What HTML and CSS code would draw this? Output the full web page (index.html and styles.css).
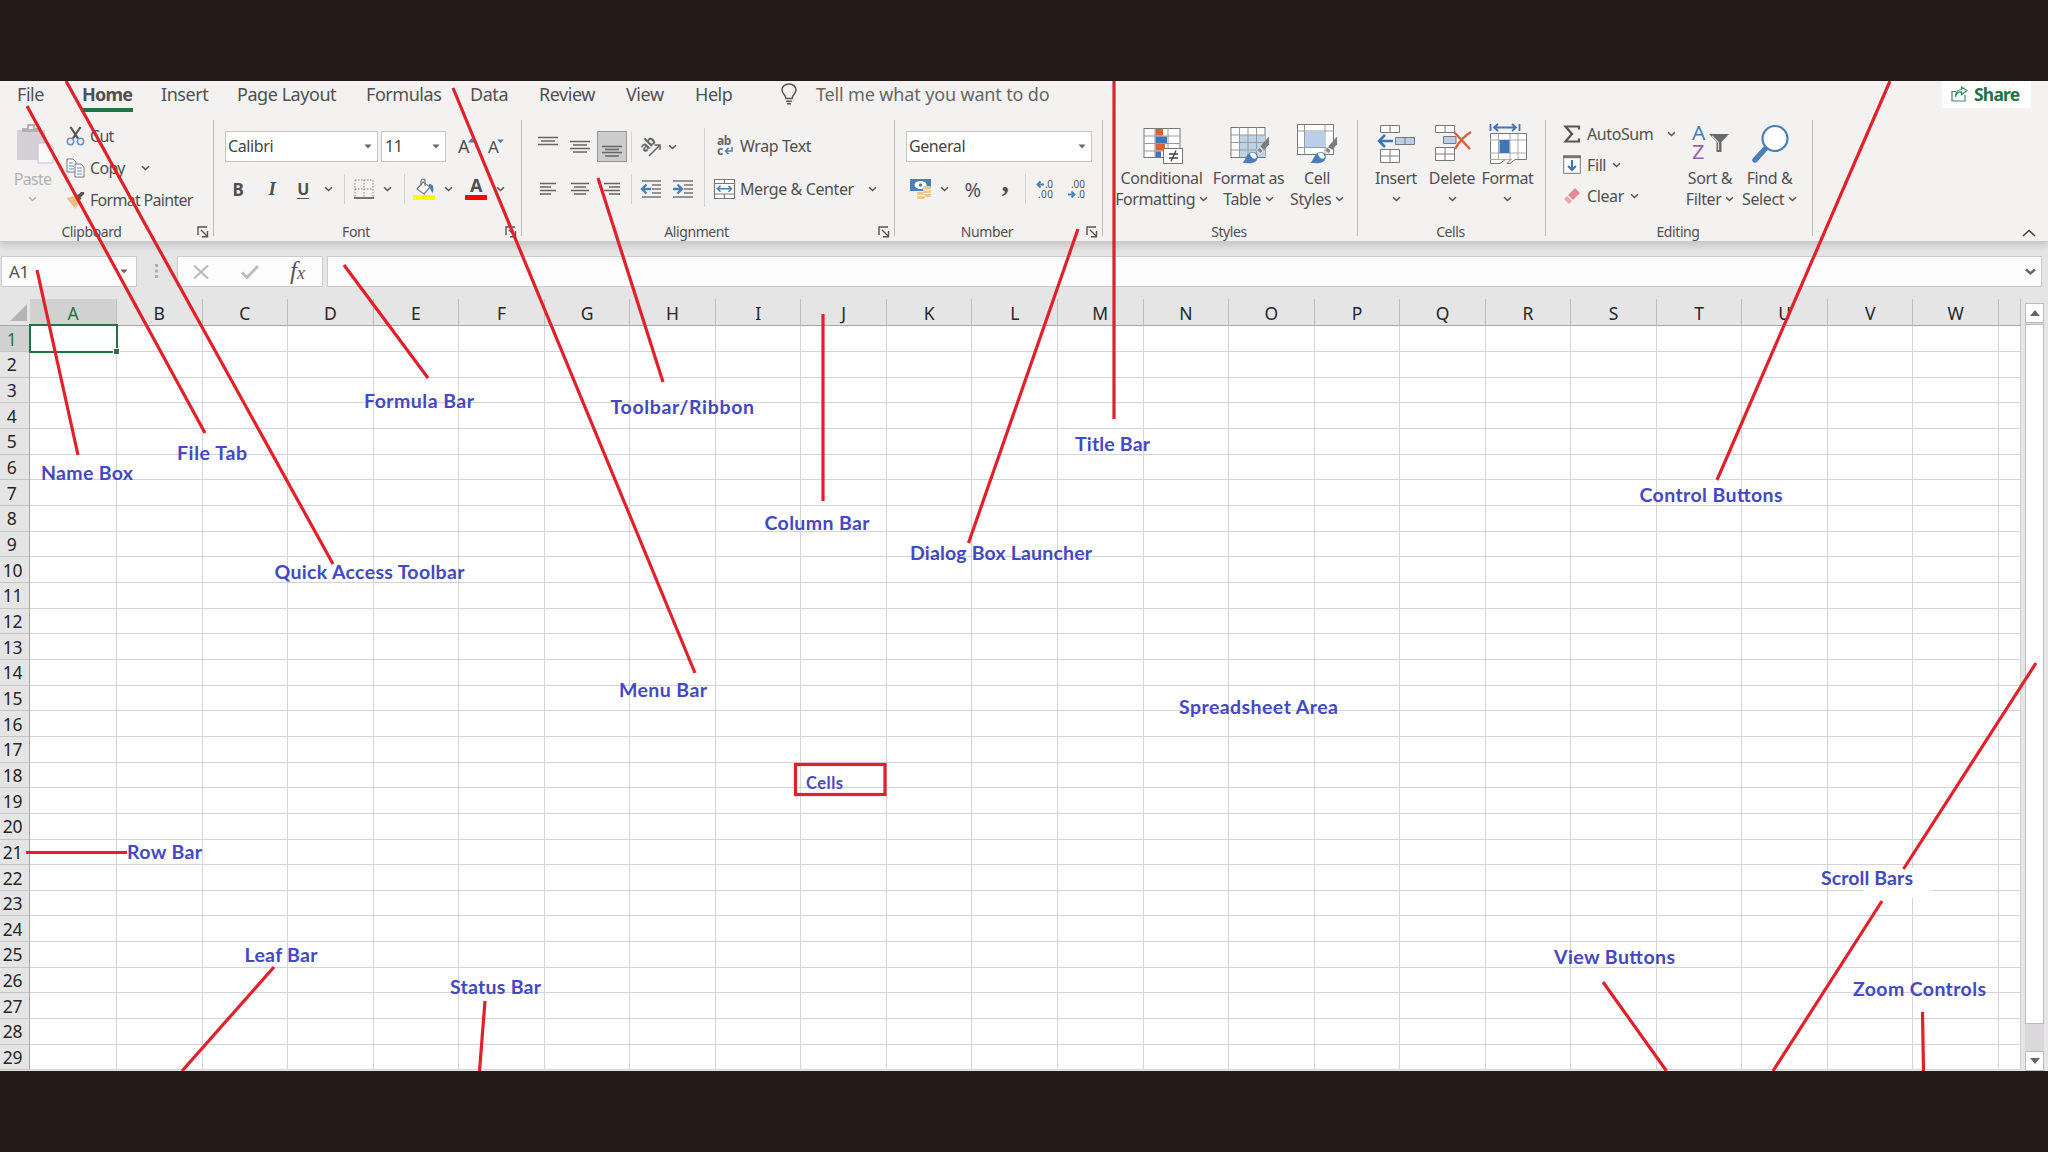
FILE: index.html
```html
<!DOCTYPE html>
<html lang="en">
<head>
    <meta charset="UTF-8">
    <meta name="viewport" content="width=device-width, initial-scale=1.0">
    <title>Parts of the Excel Window</title>
    <link rel="stylesheet" href="styles.css">
</head>
<body>

<svg class="defs" width="0" height="0">
    <symbol id="chev" viewBox="0 0 10 6"><path d="M1.2 1 L5 4.6 L8.8 1" fill="none" stroke="currentColor" stroke-width="1.7"/></symbol>
    <symbol id="caret" viewBox="0 0 8 5"><path d="M0.5 0.5 H7.5 L4 4.5 Z" fill="#666"/></symbol>
    <symbol id="launch" viewBox="0 0 12 12"><path d="M1 9 V1 H10 M4 4 L10 10 M10.5 5 V10.7 H5" fill="none" stroke="#555" stroke-width="1.4"/></symbol>
    <symbol id="brush" viewBox="0 0 30 30">
        <path d="M29 1 L20 11 L24 15 L29 9 Z" fill="#7c7c7c"/>
        <path d="M19 12 L23 16 L20 19 L16 15 Z" fill="#8a8a8a" stroke="#f3f2f1"/>
        <path d="M1 28 C5 27 5 17 12 17 C17 17 19 22 16 26 C13 29 6 29 1 28 Z" fill="#4a7fb8"/>
        <path d="M9 19 C12 16 17 19 16 23 C14 25 11 24 9 19 Z" fill="#fff"/>
    </symbol>
</svg>

<div class="workbook">
    <div class="tabs">
        <span class="tab file">File</span>
        <span class="tab home active">Home</span>
        <span class="tab insert">Insert</span>
        <span class="tab layout">Page Layout</span>
        <span class="tab formulas">Formulas</span>
        <span class="tab data">Data</span>
        <span class="tab review">Review</span>
        <span class="tab view">View</span>
        <span class="tab help">Help</span>
        <svg class="bulb" width="16" height="22" viewBox="0 0 16 22"><path d="M5 15.5 C5 12 1 11 1 7 C1 3.500 4 1 8 1 C12 1 15 3.500 15 7 C15 11 11 12 11 15.500 Z M5.200 18.300 H10.800 M6 20.800 H10" fill="none" stroke="#555" stroke-width="1.500"/></svg>
        <span class="tell">Tell me what you want to do</span>
        <button class="share">
            <svg width="17" height="16" viewBox="0 0 17 16"><path d="M5 5.500 H1 V15 H14 V9 M4.500 11 C5 7 7 5.800 10.500 5.800 V8.800 L16 4.600 L10.500 1 V3.500 C6.500 3.800 4.500 6.500 4.500 11 Z" fill="none" stroke="#3b8a62" stroke-width="1.200"/></svg>
            <span>Share</span>
        </button>
    </div>

    <div class="ribbon">
        <div class="group clipboard">
            <div class="body">
                <div class="paste">
                    <svg width="38" height="42" viewBox="0 0 38 42"><path d="M1 6 H29 V36 H1 Z" fill="#d5d0d5"/><path d="M6 8 V4 H11 V0 H19 V4 H24 V8 Z" fill="#b3b1b3"/><rect x="13" y="2" width="4" height="3" fill="#f3f2f1"/><path d="M22 19 H33 L37 23 V39 H22 Z" fill="#fbf9fb" stroke="#c5bfd0"/></svg>
                    <span>Paste</span>
                    <svg class="chev"><use href="#chev"/></svg>
                </div>
                <div class="stack">
                    <div class="tool"><svg width="18" height="20" viewBox="0 0 18 20"><path d="M4 1 L12 13 M14 1 L6 13" stroke="#555" stroke-width="2.200"/><circle cx="4" cy="15.500" r="3.200" fill="none" stroke="#6a93c4" stroke-width="1.500"/><circle cx="14" cy="15.500" r="3.200" fill="none" stroke="#6a93c4" stroke-width="1.500"/></svg><span>Cut</span></div>
                    <div class="tool"><svg width="19" height="20" viewBox="0 0 19 20"><path d="M1 1 H7 L10 4 V14 H1 Z" fill="#fff" stroke="#777"/><path d="M3 5 H7 M3 8 H8 M3 11 H8" stroke="#5a86bd"/><path d="M9 6 H15 L18 9 V19 H9 Z" fill="#fff" stroke="#777"/><path d="M11 10 H16 M11 13 H16 M11 16 H16" stroke="#5a86bd"/></svg><span>Copy</span><svg class="chev copychev"><use href="#chev"/></svg></div>
                    <div class="tool"><svg width="18" height="17" viewBox="0 0 18 17"><path d="M0 6 L9 4 L13 9 L9 17 Z" fill="#f0bd83"/><path d="M8 4 L12 2 L15 7 L12 9 Z" fill="#666"/><path d="M13 4 L16 1" stroke="#555" stroke-width="3.500" stroke-linecap="round"/></svg><span>Format Painter</span></div>
                </div>
            </div>
            <div class="caption"><span>Clipboard</span><svg class="launch"><use href="#launch"/></svg></div>
        </div>

        <div class="group font">
            <div class="body rows">
                <div class="line">
                    <div class="combo face"><span>Calibri</span><svg class="caret"><use href="#caret"/></svg></div>
                    <div class="combo size"><span>11</span><svg class="caret"><use href="#caret"/></svg></div>
                    <div class="grow">A<svg width="7" height="5" viewBox="0 0 7 5"><path d="M0 4.500 L3.500 0 L7 4.500 Z" fill="#4a7fb8"/></svg></div>
                    <div class="grow shrink">A<svg width="7" height="5" viewBox="0 0 7 5"><path d="M0 0.500 H7 L3.500 4 Z" fill="#4a7fb8"/></svg></div>
                </div>
                <div class="line font-tools">
                    <b>B</b>
                    <i>I</i>
                    <u>U</u>
                    <svg class="chev"><use href="#chev"/></svg>
                    <div class="sep"></div>
                    <svg width="20" height="20" viewBox="0 0 20 20"><path d="M1 1 H19 V18 M1 1 V18 M10 1 V18 M1 10 H19" fill="none" stroke="#888" stroke-dasharray="1.500 1.500"/><path d="M0 19 H20" stroke="#555" stroke-width="1.600"/></svg>
                    <svg class="chev"><use href="#chev"/></svg>
                    <div class="sep"></div>
                    <svg width="23" height="22" viewBox="0 0 23 22"><rect x="0" y="17" width="22" height="5" fill="#ff0"/><path d="M10 4 L17 9 L11 16 L4 11 Z" fill="#fff" stroke="#777" stroke-width="1.200"/><path d="M8 8 V3 C8 0.500 12 0.500 12 3 V8" fill="none" stroke="#777" stroke-width="1.200"/><path d="M16 6 C21 6 21 10 20 15 C18 14 18 11 16 9 Z" fill="#4a7fb8"/></svg>
                    <svg class="chev"><use href="#chev"/></svg>
                    <div class="fontcolor">A</div>
                    <svg class="chev"><use href="#chev"/></svg>
                </div>
            </div>
            <div class="caption"><span>Font</span><svg class="launch"><use href="#launch"/></svg></div>
        </div>

        <div class="group alignment">
            <div class="body">
                <div class="rows align-left">
                    <div class="line align-tools">
                        <svg width="20" height="20" viewBox="0 0 20 20"><path d="M0 1.500 H20 M3 5 H17 M0 8.500 H20" transform="translate(0 -1)" stroke="#666" stroke-width="1.300"/></svg>
                        <svg width="20" height="20" viewBox="0 0 20 20"><path d="M0 4.500 H20 M3 8 H17 M0 11.500 H20 M3 15 H17" stroke="#666" stroke-width="1.300"/></svg>
                        <div class="pressed"><svg width="20" height="20" viewBox="0 0 20 20"><path d="M0 9.500 H20 M3 12.500 H17 M0 15.500 H20 M3 19 H17" stroke="#666" stroke-width="1.300"/></svg></div>
                        <div class="sep"></div>
                        <svg width="22" height="20" viewBox="0 0 22 20"><text x="5" y="16" transform="rotate(-45 5 16)" font-size="14" textLength="16" lengthAdjust="spacingAndGlyphs" class="glyph">ab</text><path d="M9 19 L20 8 M14.500 8 H20 V13" fill="none" stroke="#666" stroke-width="1.500"/></svg>
                        <svg class="chev"><use href="#chev"/></svg>
                    </div>
                    <div class="line align-tools second">
                        <svg width="16" height="14" viewBox="0 0 16 14"><path d="M0 1.500 H16 M0 5 H11 M0 8.500 H16 M0 12 H11" stroke="#666" stroke-width="1.300"/></svg>
                        <svg width="18" height="14" viewBox="0 0 18 14"><path d="M0 1.500 H18 M3 5 H15 M0 8.500 H18 M3 12 H15" stroke="#666" stroke-width="1.300"/></svg>
                        <svg width="16" height="14" viewBox="0 0 16 14"><path d="M0 1.500 H16 M5 5 H16 M0 8.500 H16 M5 12 H16" stroke="#666" stroke-width="1.300"/></svg>
                        <div class="sep"></div>
                        <svg width="20" height="18" viewBox="0 0 20 18"><path d="M1 1 H20 M11 5 H20 M11 9 H20 M11 13 H20 M1 17 H20" stroke="#777" stroke-width="1.300"/><path d="M10 9 H1.500 M5.500 4.500 L1 9 L5.500 13.500" fill="none" stroke="#4a7fb8" stroke-width="2.400"/></svg>
                        <svg width="20" height="18" viewBox="0 0 20 18"><path d="M0 1 H20 M11 5 H20 M11 9 H20 M11 13 H20 M0 17 H20" stroke="#777" stroke-width="1.300"/><path d="M0 9 H8.500 M4.500 4.500 L9 9 L4.500 13.500" fill="none" stroke="#4a7fb8" stroke-width="2.400"/></svg>
                    </div>
                </div>
                <div class="sep tall"></div>
                <div class="rows align-right">
                    <div class="line tool wrap"><svg width="21" height="22" viewBox="0 0 21 22"><text x="3" y="10" font-size="12" class="glyph">ab</text><text x="3" y="20" font-size="12" class="glyph">c</text><path d="M18 12 V16 H12 M14.500 13 L11.500 16 L14.500 19" fill="none" stroke="#4a7fb8" stroke-width="1.600"/></svg><span>Wrap Text</span></div>
                    <div class="line tool merge"><svg width="21" height="20" viewBox="0 0 21 20"><path d="M0.500 0.500 H20.500 V19.500 H0.500 Z M0.500 4.500 H20.500 M0.500 15 H20.500 M10.500 0 V4.500 M10.500 15 V20" fill="#fff" stroke="#777" stroke-width="1.200"/><path d="M4 9.800 H17 M6.500 6.800 L3.500 9.800 L6.500 12.800 M14.500 6.800 L17.500 9.800 L14.500 12.800" fill="none" stroke="#4a7fb8" stroke-width="1.600"/></svg><span>Merge &amp; Center</span><svg class="chev"><use href="#chev"/></svg></div>
                </div>
            </div>
            <div class="caption"><span>Alignment</span><svg class="launch"><use href="#launch"/></svg></div>
        </div>

        <div class="group number">
            <div class="body rows">
                <div class="line"><div class="combo format"><span>General</span><svg class="caret"><use href="#caret"/></svg></div></div>
                <div class="line number-tools">
                    <svg width="22" height="22" viewBox="0 0 22 22"><rect x="0" y="1" width="21" height="12" fill="#4a7fb8"/><ellipse cx="10.500" cy="7" rx="6" ry="4" fill="#fff"/><circle cx="10.500" cy="7" r="1.800" fill="#4a7fb8"/><rect x="13" y="8" width="8" height="11" rx="1.500" fill="#ecc88f"/><rect x="7" y="14" width="8" height="7" rx="1.500" fill="#ecc88f"/><path d="M13 12 H21 M13 15.500 H21 M7 17.500 H15" stroke="#fff7e8"/></svg>
                    <svg class="chev"><use href="#chev"/></svg>
                    <span class="percent">%</span>
                    <span class="comma">,</span>
                    <div class="sep"></div>
                    <svg width="18" height="20" viewBox="0 0 18 20"><text x="9" y="9" font-size="10" textLength="8" class="digits">.0</text><text x="2" y="19" font-size="10" textLength="15" class="digits">.00</text><path d="M8 5.500 H1.500 M4.500 2.500 L1.500 5.500 L4.500 8.500" fill="none" stroke="#4a7fb8" stroke-width="1.800"/></svg>
                    <svg width="18" height="20" viewBox="0 0 18 20"><text x="3" y="9" font-size="10" textLength="14" class="digits">.00</text><text x="9" y="19" font-size="10" textLength="8" class="digits">.0</text><path d="M0 15.500 H6.500 M3.500 12.500 L6.500 15.500 L3.500 18.500" fill="none" stroke="#4a7fb8" stroke-width="1.800"/></svg>
                </div>
            </div>
            <div class="caption"><span>Number</span><svg class="launch"><use href="#launch"/></svg></div>
        </div>

        <div class="group styles">
            <div class="body bigs">
                <div class="big">
                    <svg width="42" height="42" viewBox="-1 0 42 42"><rect x="2" y="4.500" width="36" height="29" fill="#fff" stroke="#777"/><path d="M2 12 H38 M2 19.500 H38 M2 27 H38 M13 4.500 V33.500 M26 4.500 V33.500" stroke="#999"/><path d="M13.500 5 H21 V11.500 H13.500 Z M13.500 20 H23 V26.500 H13.500 Z" fill="#d9623b"/><path d="M13.500 12.500 H25 V19 H13.500 Z M13.500 27.500 H19 V33 H13.500 Z" fill="#3f74b5"/><rect x="21.500" y="24.500" width="19" height="15" fill="#fff" stroke="#777"/><path d="M27 30 H36 M27 34 H36 M34 26.500 L29 37.500" stroke="#444" stroke-width="1.300"/></svg>
                    <span>Conditional</span><span>Formatting <svg class="chev"><use href="#chev"/></svg></span>
                </div>
                <div class="big">
                    <svg width="42" height="42" viewBox="0 0 42 42"><rect x="3" y="3.500" width="34" height="30" fill="#fff" stroke="#777"/><rect x="11" y="11" width="26" height="22" fill="#bcd2e6"/><path d="M3 11 H37 M3 18.500 H37 M3 26 H37 M11.500 3.500 V33.500 M20 3.500 V33.500 M28.500 3.500 V33.500" stroke="#999"/><use href="#brush" x="13" y="11" width="29" height="30"/></svg>
                    <span>Format as</span><span>Table <svg class="chev"><use href="#chev"/></svg></span>
                </div>
                <div class="big">
                    <svg width="42" height="42" viewBox="0 0 42 42"><rect x="1.500" y="0.500" width="36" height="30" fill="#fff" stroke="#777"/><path d="M1.500 7 H37.500 M1.500 23.500 H37.500 M8.500 0.500 V30.500 M29 0.500 V30.500" stroke="#999"/><rect x="9" y="8" width="20" height="15" fill="#b9cfe9"/><use href="#brush" x="13" y="11" width="29" height="30"/></svg>
                    <span>Cell</span><span>Styles <svg class="chev"><use href="#chev"/></svg></span>
                </div>
            </div>
            <div class="caption"><span>Styles</span></div>
        </div>

        <div class="group cells">
            <div class="body bigs">
                <div class="big">
                    <svg width="40" height="42" viewBox="0 0 40 42"><g fill="#fff" stroke="#777"><path d="M4.500 1.500 H23.500 V8.500 H4.500 Z M14 1.500 V8.500"/><path d="M4.500 25.500 H23.500 V38.500 H4.500 Z M14 25.500 V38.500 M4.500 32 H23.500"/><path d="M19.500 13.500 H38.500 V20.500 H19.500 Z M29 13.500 V20.500" fill="#b9cfe9"/></g><path d="M17 17 H3 M9 11 L3 17 L9 23" fill="none" stroke="#3f74b5" stroke-width="2.500"/></svg>
                    <span>Insert</span><span><svg class="chev"><use href="#chev"/></svg></span>
                </div>
                <div class="big">
                    <svg width="40" height="42" viewBox="0 0 40 42"><g fill="#fff" stroke="#777"><path d="M3.500 1.500 H22.500 V8.500 H3.500 Z M13 1.500 V8.500"/><path d="M3.500 23.500 H22.500 V36.500 H3.500 Z M13 23.500 V36.500 M3.500 30 H22.500"/><path d="M11.500 12.500 H24 V19.500 H11.500 Z" fill="#b9cfe9"/></g><path d="M22 8 L38 25 M39 8 C32 12 27 18 23 25" fill="none" stroke="#d9623b" stroke-width="2.500"/></svg>
                    <span>Delete</span><span><svg class="chev"><use href="#chev"/></svg></span>
                </div>
                <div class="big">
                    <svg width="40" height="42" viewBox="0 0 40 42"><path d="M2.500 0 V7 M31.500 0 V7 M6 3.500 H28 M10 0 L6 3.500 L10 7 M24 0 L28 3.500 L24 7" fill="none" stroke="#3f74b5" stroke-width="1.800"/><path d="M2.500 9.500 H38.500 V35.500 H27 L22 39.500 H19 L23 35.500 H17 L12 39.500 H2.500 Z" fill="#fff" stroke="#777"/><path d="M2 16 H38 M2 29 H38 M10.500 10 V35 M22 10 V35 M30 10 V35 M2 35.500 H24" stroke="#aaa"/><rect x="11.500" y="16" width="10" height="13" fill="#3f74b5"/></svg>
                    <span>Format</span><span><svg class="chev"><use href="#chev"/></svg></span>
                </div>
            </div>
            <div class="caption"><span>Cells</span></div>
        </div>

        <div class="group editing">
            <div class="body">
                <div class="stack">
                    <div class="tool"><svg width="18" height="18" viewBox="0 0 18 18"><path d="M16 4.500 V1.500 H2.500 L9 9 L2.500 16.500 H16 V13.500" fill="none" stroke="#555" stroke-width="2.200"/></svg><span>AutoSum</span><svg class="chev sumchev"><use href="#chev"/></svg></div>
                    <div class="tool"><svg width="18" height="19" viewBox="0 0 18 19"><rect x="0.700" y="0.700" width="16.600" height="17.600" fill="#fff" stroke="#777"/><path d="M0 2 H18" stroke="#777" stroke-width="2.500"/><path d="M9 5 V15 M5 11 L9 15 L13 11" fill="none" stroke="#3f74b5" stroke-width="2"/></svg><span>Fill</span><svg class="chev"><use href="#chev"/></svg></div>
                    <div class="tool"><svg width="18" height="18" viewBox="0 0 18 18"><path d="M12 1 L17 6 L10 13 L5 8 Z" fill="#e58799"/><path d="M4 9 L9 14 L6 17 L1 12 Z" fill="#eda3b0"/></svg><span>Clear</span><svg class="chev"><use href="#chev"/></svg></div>
                </div>
                <div class="big sort">
                    <svg width="40" height="42" viewBox="0 0 40 42"><text x="2" y="16" font-size="19" textLength="13" lengthAdjust="spacingAndGlyphs" class="letter-a">A</text><text x="2" y="35" font-size="19" textLength="12" lengthAdjust="spacingAndGlyphs" class="letter-z">Z</text><path d="M19 10 H39 L31.500 18 V28 H26.500 V18 Z" fill="#6a6a6a"/><path d="M22 12 L28.500 18.500 V26" fill="none" stroke="#ddd" stroke-width="1.200"/></svg>
                    <span>Sort &amp;</span><span>Filter <svg class="chev"><use href="#chev"/></svg></span>
                </div>
                <div class="big find">
                    <svg width="40" height="42" viewBox="0 0 40 42"><path d="M5 36 L15 25" stroke="#4a7fb8" stroke-width="5.500" stroke-linecap="round"/><circle cx="25" cy="14.500" r="12.500" fill="#fff" stroke="#4a7fb8" stroke-width="2.200"/></svg>
                    <span>Find &amp;</span><span>Select <svg class="chev"><use href="#chev"/></svg></span>
                </div>
            </div>
            <div class="caption"><span>Editing</span></div>
        </div>

        <svg class="collapse" width="14" height="8" viewBox="0 0 14 8"><path d="M1 7 L7 1.500 L13 7" fill="none" stroke="#444" stroke-width="1.600"/></svg>
    </div>

    <div class="formula-bar">
        <div class="name-box"><span>A1</span><svg class="caret"><use href="#caret"/></svg></div>
        <svg class="dots" width="4" height="15" viewBox="0 0 4 15"><path d="M0 0 H3 V3 H0 Z M0 5.500 H3 V8.500 H0 Z M0 11 H3 V14 H0 Z" fill="#b0b0b0"/></svg>
        <div class="fx">
            <svg width="16" height="14" viewBox="0 0 16 14"><path d="M1 0.500 L15 13.500 M15 0.500 L1 13.500" stroke="#b9b9b9" stroke-width="2"/></svg>
            <svg width="18" height="14" viewBox="0 0 18 14"><path d="M1 7.500 L6 12.500 L17 1" fill="none" stroke="#bdbdbd" stroke-width="3"/></svg>
            <em>f<small>x</small></em>
        </div>
        <div class="formula"><svg width="11" height="8" viewBox="0 0 11 8"><path d="M1 1.500 L5.500 5.500 L10 1.500" fill="none" stroke="#666" stroke-width="2.400"/></svg></div>
    </div>

    <div class="sheet">
        <div class="grid" id="grid"></div>
        <div class="scrollbar">
            <div class="arrow"><svg width="10" height="6" viewBox="0 0 10 6"><path d="M0 6 L5 0 L10 6 Z" fill="#666"/></svg></div>
            <div class="thumb"></div>
            <div class="arrow"><svg width="10" height="6" viewBox="0 0 10 6"><path d="M0 0 H10 L5 6 Z" fill="#666"/></svg></div>
        </div>
    </div>

    <!-- callout lines and labels over the window, origin at the window's top left -->
    <svg class="callouts" width="2048" height="990" viewBox="0 81 2048 990">
        <rect x="1864" y="868" width="68" height="30" fill="#fff"/>
        <g class="pointers">
            <path d="M37 270 L78 455"/>
            <path d="M27 106 L205 433"/>
            <path d="M66 81 L333 564"/>
            <path d="M344 265 L428 378"/>
            <path d="M453 88 L695 673"/>
            <path d="M598 178 L663 382"/>
            <path d="M823 314 V501"/>
            <path d="M1078 229 L968.500 543"/>
            <path d="M1114 81 V419"/>
            <path d="M1890 81 L1717 480"/>
            <path d="M26 852.500 H127"/>
            <path d="M274 967 L182 1071"/>
            <path d="M485 1001 L479.500 1071"/>
            <path d="M1603 982 L1666.500 1071"/>
            <path d="M2036 663 L1903.500 869"/>
            <path d="M1882 901 L1773 1071"/>
            <path d="M1922.500 1012 L1923.500 1071"/>
            <rect x="795.500" y="764.500" width="89.500" height="30"/>
        </g>
        <g class="labels">
            <text x="41" y="479.500" textLength="92">Name Box</text>
            <text x="177" y="460" textLength="70">File Tab</text>
            <text x="274.500" y="579" textLength="190">Quick Access Toolbar</text>
            <text x="364" y="408" textLength="110">Formula Bar</text>
            <text x="610.500" y="414" textLength="143.500">Toolbar/Ribbon</text>
            <text x="619" y="696.500" textLength="88">Menu Bar</text>
            <text x="764.500" y="530" textLength="105">Column Bar</text>
            <text x="910" y="560" textLength="182">Dialog Box Launcher</text>
            <text x="1075" y="450.500" textLength="75">Title Bar</text>
            <text x="1179" y="714" textLength="159">Spreadsheet Area</text>
            <text x="1639.500" y="502" textLength="143">Control Buttons</text>
            <text x="127" y="859" textLength="75">Row Bar</text>
            <text x="244.500" y="962" textLength="73">Leaf Bar</text>
            <text x="450" y="994" textLength="91">Status Bar</text>
            <text x="1554" y="964" textLength="121">View Buttons</text>
            <text x="1821" y="885" textLength="92">Scroll Bars</text>
            <text x="1853" y="996" textLength="133">Zoom Controls</text>
            <text x="806" y="788.500" textLength="37" class="small">Cells</text>
        </g>
    </svg>
</div>

<script src="script.js"></script>
</body>
</html>
```

FILE: styles.css
```css
body {
    margin: 0;
    background-color: #251a18;
    font-family: "Noto Sans", sans-serif;
    color: #505050;
    overflow: hidden;
}
.defs {
    position: absolute;
}
.workbook {
    position: relative;
    display: flex;
    flex-direction: column;
    width: 2048px;
    height: 990px;
    margin-top: 81px;
    background-color: #e6e5e6;
    overflow: hidden;
}
svg {
    flex-shrink: 0;
}

/* Tabs */
.tabs {
    display: flex;
    align-items: center;
    height: 27px;
    padding: 0 17px 1px;
    background-color: #f4f2f0;
    font-size: 18px;
    white-space: nowrap;
    box-sizing: border-box;
    z-index: 1; /* the active underline hangs over the ribbon */
}
.tab {
    line-height: 26px;
    letter-spacing: -0.45px;
}
.file { width: 65px; }
.home { width: 51px; margin-right: 28px; }
.insert { width: 76px; }
.layout { width: 129px; }
.formulas { width: 104px; }
.data { width: 69px; }
.review { width: 87px; }
.view { width: 69px; }
.help { width: 86px; }
.active {
    position: relative;
    font-weight: bold;
    letter-spacing: -0.8px;
    height: 31px;
    margin-top: 4px;
    border-bottom: 4px solid #217346;
    box-sizing: border-box;
    z-index: 1;
}
.tell {
    margin-left: 19px;
    color: #666;
    letter-spacing: -0.15px;
}
.share {
    display: flex;
    align-items: center;
    gap: 6px;
    width: 89px;
    height: 27px;
    margin-left: auto;
    padding: 0 9px;
    border: none;
    background-color: #fff;
    color: #217346;
    font-family: inherit;
    font-size: 17.5px;
    font-weight: bold;
    letter-spacing: -0.8px;
}

/* Ribbon */
.ribbon {
    display: flex;
    height: 134px;
    padding-top: 12px;
    background-color: #f3f2f1;
    border-bottom: 1px solid #c9c9c9;
    box-shadow: 0 3px 8px rgba(0, 0, 0, 0.16);
    box-sizing: border-box;
    font-size: 16px;
    letter-spacing: -0.4px;
    white-space: nowrap;
}
.group {
    display: flex;
    flex-direction: column;
    height: 116px;
    border-right: 1px solid #bbb;
    box-sizing: border-box;
}
.clipboard { width: 214px; }
.font { width: 308px; }
.alignment { width: 373px; }
.number { width: 208px; }
.styles { width: 255px; }
.cells { width: 188px; }
.editing { width: 267px; }
.body {
    display: flex;
    height: 108px;
}
.caption {
    display: flex;
    align-items: center;
    height: 8px;
    font-size: 14px;
    line-height: 8px;
}
.caption span {
    flex: 1;
    text-align: center;
    padding-right: 2px;
}
.caption:has(.launch) span {
    padding-right: 7px;
}
.clipboard .caption:has(.launch) span {
    padding-right: 14px;
}
.launch {
    width: 12px;
    height: 12px;
    margin-right: 4px;
}
.chev {
    width: 9px;
    height: 6px;
    color: #555;
}
.caret {
    width: 8px;
    height: 5px;
}
.rows {
    flex-direction: column;
}
.line {
    display: flex;
    align-items: center;
    height: 30px;
}
.rows .line:first-child {
    margin-top: 11px;
    margin-bottom: 13px;
}
.tool {
    display: flex;
    align-items: center;
}
.sep {
    width: 1px;
    height: 30px;
    background-color: #d2d2d2;
}
.tall {
    height: 79px;
    margin-top: 8px;
}
.combo {
    display: flex;
    align-items: center;
    justify-content: space-between;
    height: 31px;
    padding: 0 5px 0 2px;
    background-color: #fff;
    border: 1px solid #c6c6c6;
    box-sizing: border-box;
    color: #444;
}

/* Clipboard */
.clipboard .body {
    letter-spacing: -0.7px;
}
.paste {
    display: flex;
    flex-direction: column;
    align-items: center;
    width: 66px;
    padding: 4px 1px 0 0;
    box-sizing: border-box;
    color: #b5b3b5;
}
.paste > svg:first-child {
    margin-left: 5px;
}
.paste span {
    line-height: 22px;
    padding-top: 2px;
}
.paste .chev {
    margin-top: 6px;
    color: #b5b3b5;
}
.stack {
    display: flex;
    flex-direction: column;
}
.stack .tool {
    height: 32px;
}
.clipboard .tool > svg:first-child {
    width: 19px;
    margin-right: 5px;
}
.copychev {
    margin-left: 16px;
}

/* Font */
.font .line:first-child {
    margin-left: 11px;
}
.face { width: 153px; margin-right: 3px; }
.size { width: 65px; padding-left: 3px; }
.grow {
    display: flex;
    width: 18px;
    margin-left: 12px;
    font-size: 18px;
}
.shrink {
    font-size: 17px;
}
.grow svg {
    margin-top: 4px;
    margin-left: -1px;
}
.font-tools {
    display: grid;
    grid-template-columns: 32px 36px 26px 24px 8px 32px 14px 20px 20px 28px 28px 20px;
    justify-items: center;
    margin-left: 8px;
    font-size: 17px;
}
.font-tools i {
    font-family: "Liberation Serif", serif;
    font-weight: bold;
    font-size: 19px;
}
.font-tools u {
    font-weight: bold;
    font-size: 16px;
    text-underline-offset: 3px;
}
.fontcolor {
    width: 22px;
    height: 22px;
    border-bottom: 5px solid #f00;
    box-sizing: border-box;
    font-size: 18px;
    font-weight: bold;
    line-height: 14px;
    text-align: center;
}

/* Alignment */
.align-left {
    width: 172px;
    padding-left: 10px;
}
.align-tools {
    display: grid;
    grid-template-columns: 31px 33px 32px 7px 32px 10px;
    justify-items: center;
}
.align-tools svg {
    overflow: visible;
}
.second {
    grid-template-columns: 31px 33px 32px 7px 32px 32px;
}
.pressed {
    display: flex;
    align-items: center;
    justify-content: center;
    width: 30px;
    height: 31px;
    background-color: #cdcccd;
    border: 1px solid #979797;
    box-sizing: border-box;
}
.align-right {
    padding-left: 9px;
}
.align-right svg {
    overflow: visible;
}
.align-right span {
    margin-left: 5px;
}
.merge .chev {
    margin-left: 14px;
}
.glyph {
    fill: #666;
    font-weight: bold;
}

/* Number */
.number .line {
    margin-left: 11px;
}
.format { width: 186px; }
.number-tools {
    display: grid;
    grid-template-columns: 30px 16px 41px 24px 16px 24px 40px;
    justify-items: center;
}
.number-tools svg {
    overflow: visible;
}
.percent {
    font-size: 20px;
}
.comma {
    font-family: "Liberation Serif", serif;
    font-weight: bold;
    font-size: 30px;
    line-height: 10px;
    margin-top: -16px;
}
.digits {
    fill: #555;
    letter-spacing: 0;
}

/* Large buttons */
.bigs {
    display: grid;
    padding-left: 9px;
}
.styles .bigs { grid-template-columns: 99px 75px 62px; }
.cells .bigs { grid-template-columns: 56px 56px 55px; padding-left: 10px; }
.big {
    display: flex;
    flex-direction: column;
    align-items: center;
    padding-top: 4px;
}
.big > svg {
    margin-bottom: 2px;
    overflow: visible;
}
.big span {
    line-height: 21px;
}
.big .chev {
    margin-bottom: 3px;
}

/* Editing */
.editing .stack {
    width: 121px;
    margin-top: -2px;
    padding-left: 17px;
}
.editing .stack .tool {
    height: 31px;
    gap: 6px;
}
.editing .stack .sumchev {
    margin-left: 8px;
}
.sort { width: 52px; }
.find { width: 67px; }
.letter-a { fill: #4a7fb8; }
.letter-z { fill: #9560b8; }
.collapse {
    margin: 109px 12px 0 auto;
}

/* Formula bar */
.formula-bar {
    display: flex;
    align-items: center;
    height: 31px;
    margin-top: 14px;
    padding: 0 6px 0 1px;
}
.formula-bar > div {
    display: flex;
    align-items: center;
    height: 31px;
    background-color: #fefdfe;
    border: 1px solid #cbcbcb;
    box-sizing: border-box;
}
.formula-bar .name-box {
    justify-content: space-between;
    width: 136px;
    padding: 0 8px 0 7px;
    font-size: 17px;
    letter-spacing: -0.4px;
}
.dots {
    width: 4px;
    margin: 0 18px;
}
.formula-bar .fx {
    justify-content: space-between;
    width: 146px;
    padding: 0 17px 0 15px;
}
.fx em {
    font-family: "Liberation Serif", serif;
    font-size: 25px;
    line-height: 25px;
    color: #555;
}
.fx small {
    font-size: 18px;
}
.formula-bar .formula {
    flex: 1;
    justify-content: flex-end;
    margin-left: 4px;
    padding-right: 5px;
}

/* Sheet */
.sheet {
    display: flex;
    height: 772px;
    margin-top: 12px;
}
.grid {
    display: grid;
    grid-template-columns: 30px 87px repeat(22, 85.55px) 21.9px;
    grid-template-rows: 27.4px repeat(29, 25.67px);
    width: 2021px;
}
.cell {
    background-color: #fff;
    border-right: 1px solid #d6d3d8;
    border-bottom: 1px solid #d6d3d8;
}
.head {
    display: flex;
    align-items: center;
    justify-content: center;
    background-color: #e6e5e6;
    border-right: 1px solid #bdbcbd;
    border-bottom: 1px solid #a5a5a5;
    color: #262626;
    font-size: 17.5px;
}
.col-head {
    padding-top: 2px;
    line-height: 24px;
}
.row-head {
    justify-content: flex-end;
    padding-right: 7px;
    border-right: 1px solid #a5a5a5;
    border-bottom: 1px solid #c6c5c6;
    letter-spacing: -0.4px;
}
.row-head.one-digit {
    justify-content: center;
    padding-right: 6px;
}
.selected {
    background-color: #d2d1d2;
    color: #217346;
}
.corner {
    display: flex;
    align-items: flex-end;
    justify-content: flex-end;
    border-bottom: 1px solid #a5a5a5;
    padding: 0 3px 4px 0;
}
.corner::after {
    content: "";
    border-left: 17px solid transparent;
    border-bottom: 17px solid #b5b4b5;
}
.active-cell {
    position: relative;
    margin: -2px -1px -1px -1px;
    border: 2px solid #217346;
    z-index: 1;
}
.active-cell::after {
    content: "";
    position: absolute;
    right: -4px;
    bottom: -4px;
    width: 5px;
    height: 5px;
    background-color: #217346;
    border: 1px solid #fff;
}
.scrollbar {
    display: flex;
    flex-direction: column;
    width: 19px;
    height: 768px;
    margin: 4px 0 0 4px;
    background-color: #dad8da;
}
.arrow {
    display: flex;
    align-items: center;
    justify-content: center;
    height: 20px;
    background-color: #fff;
    border: 1px solid #bbb;
    box-sizing: border-box;
}
.thumb {
    height: 700px;
    margin: 1px 0 27px;
    background-color: #fff;
    border: 1px solid #bbb;
    box-sizing: border-box;
}

/* Callouts */
.callouts {
    position: absolute;
    left: 0;
    top: 0;
    z-index: 2;
}
.pointers {
    fill: none;
    stroke: #e2202a;
    stroke-width: 3.2;
}
.labels {
    fill: #4448c2;
    font-family: Lato, sans-serif;
    font-size: 19.5px;
    font-weight: bold;
}
.small {
    font-size: 16.5px;
}
```

FILE: script.js
```js
const grid = document.getElementById('grid');
const columns = 'ABCDEFGHIJKLMNOPQRSTUVW'.split('');
const rowCount = 29;

function addCell(className, text) {
    const cell = document.createElement('div');
    cell.className = className;
    cell.textContent = text || '';
    grid.appendChild(cell);
}

addCell('corner');
columns.forEach(letter => {
    addCell('head col-head' + (letter === 'A' ? ' selected' : ''), letter);
});
addCell('head col-head');

for (let row = 1; row <= rowCount; row++) {
    addCell('head row-head' + (row < 10 ? ' one-digit' : '') + (row === 1 ? ' selected' : ''), row);
    for (let col = 0; col <= columns.length; col++) {
        addCell(row === 1 && col === 0 ? 'cell active-cell' : 'cell');
    }
}
```
